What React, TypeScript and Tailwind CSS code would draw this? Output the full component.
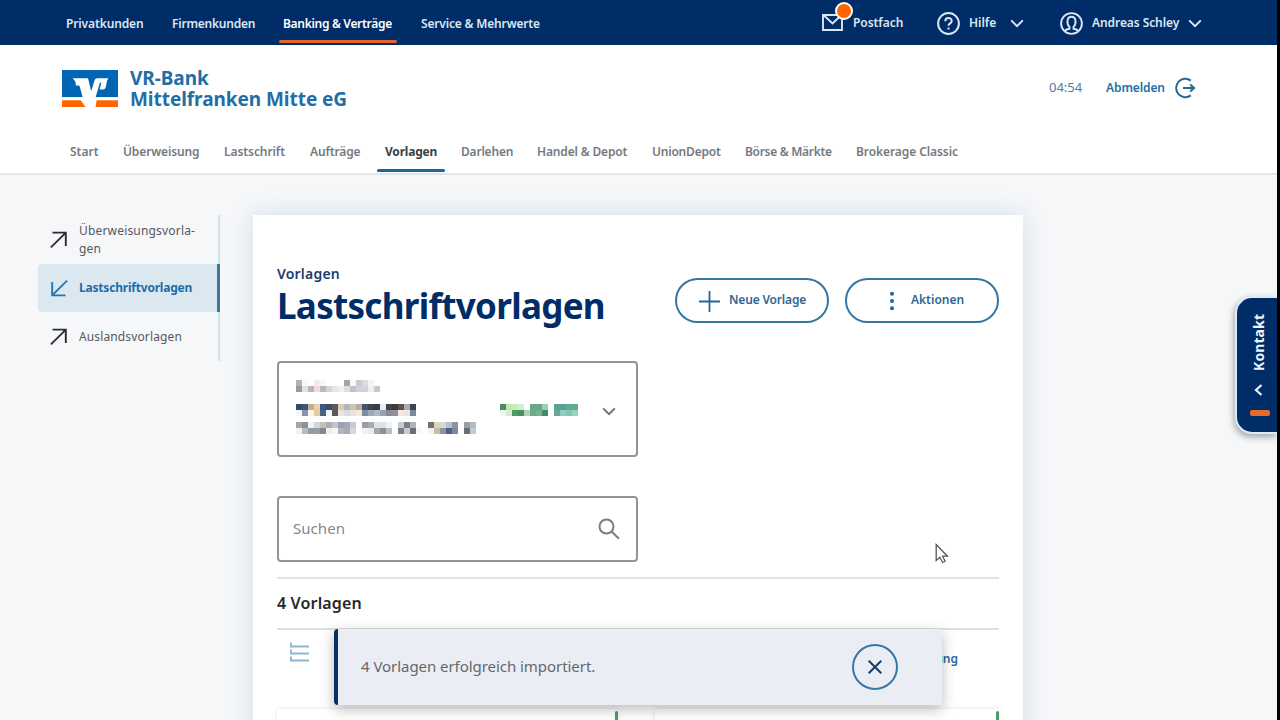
import React from 'react'

const topLinks = [
	{ label: 'Privatkunden', cls: 'w-[105px] tracking-[-0.12px]' },
	{ label: 'Firmenkunden', cls: 'w-[108px] pl-px tracking-[-0.22px]' },
	{ label: 'Banking & Verträge', cls: 'w-[118px] pl-1 tracking-[-0.3px] text-white', active: true },
	{ label: 'Service & Mehrwerte', cls: 'ml-6 tracking-[-0.17px]' },
]

const mainLinks = [
	{ label: 'Start', cls: 'w-[53px]' },
	{ label: 'Überweisung', cls: 'w-[101px] tracking-[-0.12px]' },
	{ label: 'Lastschrift', cls: 'w-[86px] tracking-[-0.08px]' },
	{ label: 'Aufträge', cls: 'w-[67px] tracking-[-0.15px]' },
	{ label: 'Vorlagen', cls: 'w-[68px] pl-2 mr-4 tracking-[-0.2px] text-[#3c3e41] font-bold', active: true },
	{ label: 'Darlehen', cls: 'w-[76px] tracking-[-0.2px]' },
	{ label: 'Handel & Depot', cls: 'w-[115px] tracking-[-0.15px]' },
	{ label: 'UnionDepot', cls: 'w-[93px] tracking-[-0.2px]' },
	{ label: 'Börse & Märkte', cls: 'w-[111px] tracking-[-0.3px]' },
	{ label: 'Brokerage Classic', cls: 'tracking-[-0.08px]' },
]

// 变成马赛克的账户信息, _ 表示空白
const mosaic = [
	{
		y: 0,
		x: 0,
		cells: [
			'b0b2b5 f6f6f6 _ fbe9ea fdf6f6 _ _ _ a5a5a8 fafafa c9cbd0 d8dbe0 f2f3f6 _',
			'98999d dfe2e2 b3b8ba f0dcdd b9b9bc d5d5d7 e5e5e5 efefef dedee0 c0c2c6 cfd2d7 d2d5da efeff1 c8c8cb',
		],
	},
	{
		y: 24,
		x: 0,
		cells: [
			'35496a 3a577c c5ab92 ead2b0 3a5a80 34516f 5d5a57 d9cbbb b5b5b5 cdc5b8 b8aca4 44546e 3a4450 343e4a e5ecf2 454147 3c3942 62504f aaa9b3 3a4450',
			'f5f5fa 8494b6 fbf3e8 e3cba8 4a6480 f3f6fa 5c5a58 eee4d8 d8dce0 e8e2d8 f5ead8 7e8ba5 a0a8b8 b0b8c4 9aa2b0 868c98 8f90a0 f3e6dc e8e6e2 7d8799',
		],
	},
	{
		y: 42,
		x: 0,
		cells: [
			'a0a5a8 8b9198 f4f4f4 d5d5d2 c5c0bc a8b0b4 c0c5cc 9aa0b4 a5a8b8 c5ccd6 _ 9a9ca2 a8acb2 e2e2e2 d8e2ea eef2f4 _ c5ccd0 7a7e84 b0b4b8 _ _ 75706e e0d2bc d5dadd b8c0c8 8c94a6 _ 9aa0a6 b0bcc8',
			'f2f2f4 b8bcc0 8f9aa2 959fa8 82888e eef0ee f8f4f2 b5b2c4 a8a8be d8d8e0 _ f0f2f4 e8ece8 a8a4ac 8a9098 b8bec4 _ 7c8084 c8ccce 686e72 f8f8f4 _ f2f2f2 c8bca4 8e94a0 4c628e 7c889c _ 6a6e74 c0ccd4',
		],
	},
	{
		y: 24,
		x: 34,
		cells: [
			'4a8a66 c0eaa8 c5efb0 cdf0d0 _ 6ba888 6aa58a 98d0b8 _ 5aa392 5a9e98 62a898 62aa90',
			'eaf8ee d8ecd0 4f9a60 4a8e5c b0d0bc 68ae88 70b490 48886a _ 6aa890 8ccfc0 80c4b4 98d2c0',
		],
	},
]

const Mosaic = () => (
	<svg width="288" height="54" viewBox="0 0 288 54" shapeRendering="crispEdges">
		{mosaic.map(block =>
			block.cells.map((row, r) =>
				row
					.split(' ')
					.map((c, i) =>
						c === '_' ? null : (
							<rect
								key={`${block.x}-${block.y}-${r}-${i}`}
								x={(block.x + i) * 6}
								y={block.y + r * 6}
								width="6"
								height="6"
								fill={'#' + c}
							/>
						)
					)
			)
		)}
	</svg>
)

const Chevron = ({ className }: { className?: string }) => (
	<svg className={className} width="14" height="9" viewBox="0 0 14 9" fill="none" stroke="currentColor" strokeWidth="2">
		<path d="M1.2 1.4 7 7.1l5.8-5.7" />
	</svg>
)

const Arrow = ({ className }: { className?: string }) => (
	<svg className={className} width="18" height="18" viewBox="0 0 18 18" fill="none" stroke="currentColor" strokeWidth="1.9">
		<path d="M2.5 1.6h13.3V15M15.6 1.8.9 16.4" />
	</svg>
)

const Logo = () => (
	<svg width="56" height="37" viewBox="0 0 56 37">
		<path fill="#0066b3" d="M0 0h56v27.3H0z" />
		<path fill="#fff" d="M0 27.3h56v2.9H0z" />
		<path fill="#ff6600" d="M0 30.2h56V37H0z" />
		<path
			fill="#fff"
			d="M10.5 8.2H26l3.2 13 3.3-10.6c.5-1.7 1.5-2.4 3.1-2.4h10.9c-1 1.2-1.4 2.3-1.7 3.8l-1 4.8c-.4 1.800-1.200 2.600-2.800 2.600h-3.400l1.700-6.300c.2-.8-1.200-.8-1.500 0L33.400 28l1.200 2.200-1 6.800H23.500l-4.800-6.800 2.200-2.200-3.200-11.400c-.2-.8-.6-1.200-1.400-1.200h-2.500c.2-3-.9-5.400-3.300-7.200z"
		/>
	</svg>
)

const Header = () => (
	<div className="flex h-[45px] shrink-0 bg-[#002d67] text-[12px] font-semibold text-[#dce6f3]">
		<nav className="flex pl-[66px]">
			{topLinks.map(l => (
				<a key={l.label} className={'flex h-[43px] flex-col justify-between whitespace-nowrap pt-[15px] leading-[17px] ' + l.cls}>
					{l.label}
					{l.active && <span className="-ml-1 h-[3px] w-[118px] rounded-sm bg-[#e0662b]" />}
				</a>
			))}
		</nav>
		<div className="ml-auto mr-[75px] flex h-[45px] items-center">
			<div className="relative mr-[10px]">
				<svg className="block" width="21" height="17" viewBox="0 0 21 17" fill="none" stroke="currentColor" strokeWidth="1.9">
					<path d="M1 1h19v15H1zM2 1.5l8.5 8 8.5-8" />
				</svg>
				<span className="absolute -top-[12px] left-[13px] size-[18px] rounded-full border-2 border-white bg-[#ff6600]" />
			</div>
			<span className="w-[84px] tracking-[-0.05px]">Postfach</span>
			<svg className="mr-[9px] mt-px" width="23" height="23" viewBox="0 0 23 23" fill="none" stroke="currentColor" strokeWidth="2">
				<circle cx="11.5" cy="11.5" r="10.4" />
				<path d="M8.3 9.3c0-4.3 6.4-4.2 6.4-.3 0 2.4-3.2 2.3-3.2 4.8M11.5 15.5v2" />
			</svg>
			<span className="w-[41px]">Hilfe</span>
			<Chevron className="mr-[36px] mt-[2px]" />
			<svg className="mr-[9px] mt-px" width="23" height="23" viewBox="0 0 23 23" fill="none" stroke="currentColor" strokeWidth="1.9">
				<circle cx="11.5" cy="11.5" r="10.4" />
				<path d="M4.8 19.2c.8-1.6 2.3-2 4.7-2.4v-1.9C6.7 12.5 6.3 4.8 11.5 4.8s4.8 7.7 2 10.1v1.9c2.4.4 3.9.8 4.7 2.4" />
			</svg>
			<span className="mt-px w-[96px] tracking-[-0.08px]">Andreas Schley</span>
			<Chevron className="mt-[2px]" />
		</div>
	</div>
)

const Brand = () => (
	<div className="h-[130px] shrink-0 border-b-2 border-[#e2e6ea] bg-white">
		<div className="flex h-[90px] pl-[62px] pt-[25px]">
			<Logo />
			<div className="ml-3 -mt-[2px] text-[19px] font-bold leading-[21px] tracking-[-0.05px] text-[#1f6ea6]">
				<div>VR-Bank</div>
				<div>Mittelfranken Mitte eG</div>
			</div>
			<div className="ml-auto mr-[81px] flex h-[35px] items-center text-[12px] text-[#4e7ea5]">
				<span className="w-[57px] text-[13px]">04:54</span>
				<span className="mr-[9px] w-[59px] font-semibold tracking-[-0.1px] text-[#236ea7]">Abmelden</span>
				<svg width="22" height="22" viewBox="0 0 22 22" fill="none" stroke="#286792" strokeWidth="2">
					<path d="M16.8 3.6a9.2 9.2 0 1 0 0 14.8M9 11h11.500M16.200 7.500l3.900 3.500-3.900 3.500" />
				</svg>
			</div>
		</div>
		<nav className="flex h-[37px] pl-[70px] text-[12px] font-semibold text-[#75797e]">
			{mainLinks.map(l => (
				<a key={l.label} className={'flex flex-col justify-between whitespace-nowrap pt-[8px] leading-[17px] ' + l.cls}>
					{l.label}
					{l.active && <span className="-ml-2 h-[3px] w-[68px] rounded-sm bg-[#1c6898]" />}
				</a>
			))}
		</nav>
	</div>
)

const Sidebar = () => (
	<aside className="ml-[38px] mt-[40px] h-[146px] w-[182px] text-[12px] leading-[18px] text-[#55595e]">
		<div className="flex h-[49px] items-center border-r-2 border-[#d5e1e9] pl-[12px]">
			<Arrow className="mr-[11px] shrink-0 text-[#2b2d30]" />
			<span className="tracking-[0.18px]">
				Überweisungsvorla-
				<br />
				gen
			</span>
		</div>
		<div className="flex h-[48px] items-center rounded-l border-r-[3px] border-[#397a9f] bg-[#dce8f0] pl-[12px]">
			<Arrow className="mr-[11px] shrink-0 rotate-180 text-[#2874ad]" />
			<span className="font-bold tracking-[-0.2px] text-[#226ca8]">Lastschriftvorlagen</span>
		</div>
		<div className="flex h-[49px] items-center border-r-2 border-[#d5e1e9] pl-[12px]">
			<Arrow className="mr-[11px] shrink-0 text-[#2b2d30]" />
			<span className="tracking-[0.13px]">Auslandsvorlagen</span>
		</div>
	</aside>
)

const Panel = () => (
	<main className="ml-[33px] mt-[40px] h-[600px] w-[770px] bg-white px-6 shadow-[0_0_24px_rgba(0,70,120,0.14)]">
		<div className="flex h-[146px] pt-[49px]">
			<div className="w-[398px]">
				<div className="text-[14px] font-semibold leading-[19px] tracking-[0.2px] text-[#1c3d6c]">Vorlagen</div>
				<h1 className="text-[35px] font-bold leading-[46px] tracking-[-0.7px] text-[#002d67]">Lastschriftvorlagen</h1>
			</div>
			<div className="mt-[14px] flex gap-[16px] text-[12px] font-semibold text-[#2f6694]">
				<button className="flex h-[45px] w-[154px] items-center rounded-full border-2 border-[#3577a3] pl-[22px] pb-px">
					<svg className="mr-[9px] mt-[2px]" width="21" height="21" viewBox="0 0 21 21" stroke="#256494" strokeWidth="1.8">
						<path d="M10.5 0v21M0 10.5h21" />
					</svg>
					<span className="whitespace-nowrap pb-px tracking-[-0.18px]">Neue Vorlage</span>
				</button>
				<button className="flex h-[45px] w-[154px] items-center rounded-full border-2 border-[#3577a3] pl-[42px] pb-px">
					<svg className="mr-[16px] mt-[2px]" width="6" height="20" viewBox="0 0 6 20" fill="#256494">
						<circle cx="3" cy="2.8" r="2" />
						<circle cx="3" cy="10" r="2" />
						<circle cx="3" cy="17.2" r="2" />
					</svg>
					<span className="pb-px">Aktionen</span>
				</button>
			</div>
		</div>
		<div className="flex h-[96px] w-[361px] items-start justify-between rounded-[4px] border-2 border-[#929496] pl-[17px] pr-[20px] pt-[17px]">
			<Mosaic />
			<Chevron className="mt-[27px] text-[#6f7173]" />
		</div>
		<div className="mt-[39px] flex h-[66px] w-[361px] items-center justify-between rounded-[4px] border-2 border-[#929496] pl-[14px] pr-[16px]">
			<span className="pb-px text-[15px] tracking-[0.05px] text-[#85878a]">Suchen</span>
			<svg className="mb-px" width="22" height="22" viewBox="0 0 22 22" fill="none" stroke="#7b7d7f" strokeWidth="2">
				<circle cx="8.5" cy="8.5" r="7" />
				<path d="M13.5 13.5l7.5 7.3" />
			</svg>
		</div>
		<div className="mt-[15px] h-[51px] w-[722px] border-t-2 border-[#e0e3e6] pt-[12px] text-[16px] font-semibold leading-[24px] tracking-[0.15px] text-[#24282c]">
			4 Vorlagen
		</div>
		<div className="flex h-[81px] w-[722px] justify-between border-t-2 border-[#dce0e4]">
			<svg className="ml-[13px] mt-[12px]" width="19" height="20" viewBox="0 0 19 20" fill="none" stroke="#8db7d2" strokeWidth="1.8">
				<path d="M.9.500v4H19M.9 7.500v4H19M.9 14.500v4H19" />
			</svg>
			<span className="mr-[41px] mt-[20px] text-[12px] font-semibold leading-[18px] text-[#2c6896]">Verwendung</span>
		</div>
		<div className="flex gap-[37px]">
			<div className="h-[40px] w-[341px] pt-[2px] shadow-[0_0_5px_rgba(0,0,0,0.1)]">
				<div className="ml-auto h-full w-[3px] rounded-t bg-[#4c9a6c]" />
			</div>
			<div className="h-[40px] w-[344px] pt-[2px] shadow-[0_0_5px_rgba(0,0,0,0.1)]">
				<div className="ml-auto h-full w-[3px] rounded-t bg-[#4c9a6c]" />
			</div>
		</div>
	</main>
)

const Toast = () => (
	<div className="absolute left-[334px] top-[629px] flex h-[76px] w-[608px] items-center rounded-sm border-l-4 border-[#0a2f63] bg-[#eaeef4] pl-[23px] pr-[44px] shadow-[0_4px_14px_rgba(0,0,0,0.28)]">
		<span className="pb-px text-[15px] tracking-[-0.05px] text-[#63676c]">4 Vorlagen erfolgreich importiert.</span>
		<button className="ml-auto flex size-[46px] items-center justify-center rounded-full border-2 border-[#3577a3]">
			<svg width="14" height="14" viewBox="0 0 14 14" stroke="#1b3a68" strokeWidth="2">
				<path d="M.7.7l12.6 12.6M13.3.7.7 13.3" />
			</svg>
		</button>
	</div>
)

const ContactTab = () => (
	<div className="absolute right-[3px] top-[296px] flex h-[138px] w-[42px] flex-col items-center rounded-l-[17px] border-2 border-r-0 border-[#dcebf8] bg-[#002d67] pl-[4px] pt-[15px] text-[#eef4fb] shadow-[-1px_3px_7px_rgba(0,0,0,0.35)]">
		<span className="mr-px h-[58px] rotate-180 text-[14px] font-bold leading-[20px] tracking-[0.1px] [writing-mode:vertical-rl]">Kontakt</span>
		<svg className="mr-px mt-[13px]" width="9" height="12" viewBox="0 0 9 12" fill="none" stroke="currentColor" strokeWidth="2.2">
			<path d="M7.5 1 2 6l5.500 5" />
		</svg>
		<span className="ml-[2px] mt-[14px] h-[6px] w-[20px] rounded-[2px] bg-[#e86b2a]" />
	</div>
)

export default function App() {
	return (
		<div className="relative h-[720px] w-[1280px] overflow-hidden bg-black font-['Noto_Sans',sans-serif]">
			<div className="flex h-full w-[1277px] flex-col overflow-hidden bg-[#f5f7f9]">
				<Header />
				<Brand />
				<div className="flex flex-1 items-start">
					<Sidebar />
					<Panel />
				</div>
			</div>
			<Toast />
			<ContactTab />
			{/* 鼠标指针 */}
			<svg className="absolute left-[935px] top-[543px]" width="14" height="21" viewBox="0 0 14 21">
				<path d="M1.2 1.5v16l3.7-3.3 2.7 5.3 2.5-1.2-2.5-5.1h4.8z" fill="#fff" stroke="#55585c" strokeWidth="1.3" />
			</svg>
		</div>
	)
}
